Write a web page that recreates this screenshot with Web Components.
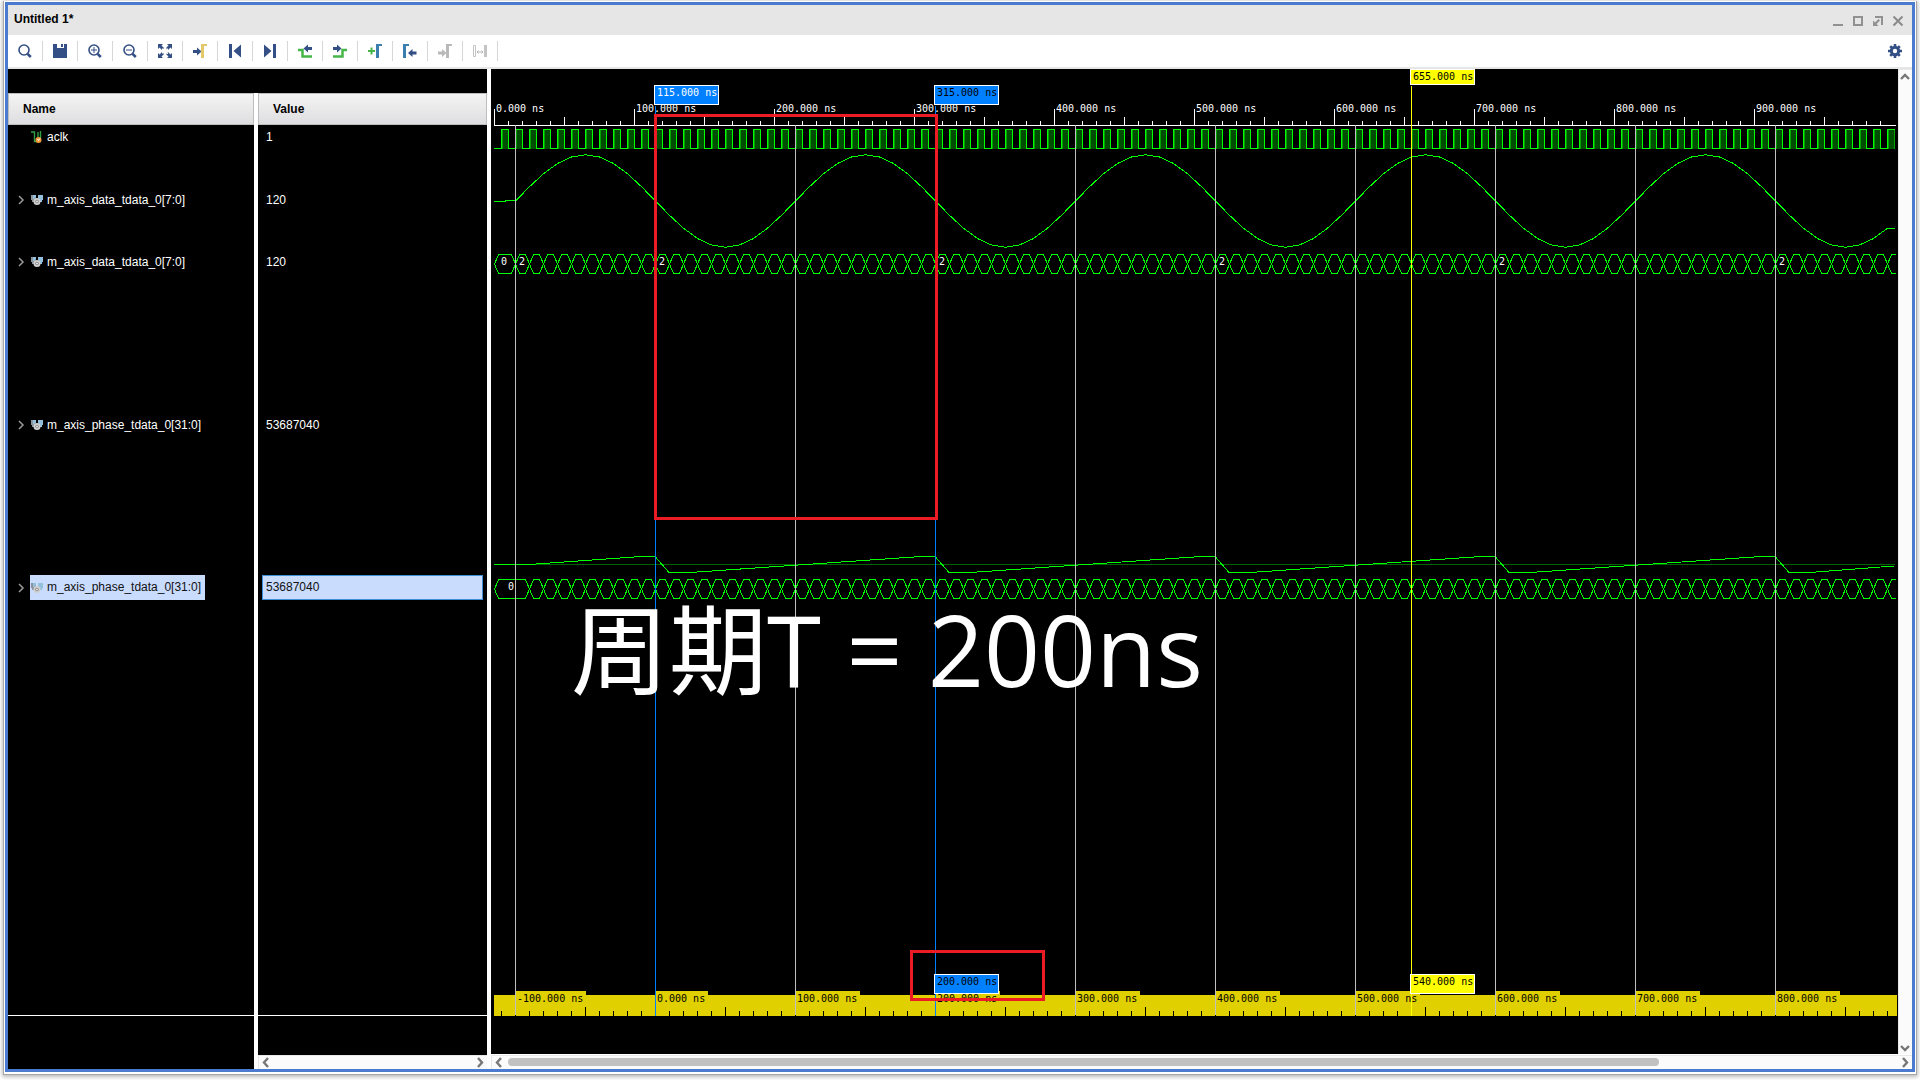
<!DOCTYPE html>
<html lang="en">
<head>
<meta charset="utf-8">
<meta name="viewport" content="width=device-width, initial-scale=1">
<title>Untitled 1*</title>
<style>
  html, body { height: 100%; }
  body {
    margin: 0;
    padding: 2px 5px 8px;
    box-sizing: border-box;
    background: #fff;
    font: 12px/16px "Liberation Sans", Arial, sans-serif;
  }
</style>
</head>
<body>
<wave-window title-text="Untitled 1*">
  <wave-toolbar slot="toolbar"></wave-toolbar>
  <signal-table slot="signals"></signal-table>
  <wave-view slot="waves"></wave-view>
</wave-window>

<script>
const NAVY = "#334f85";
const GREEN = "#46b648";
const TEAL = "#3a7fb0";

const LENS = `<circle cx="6" cy="6" r="5" fill="none" stroke="${NAVY}" stroke-width="1.6"/><path d="M9.6 9.8 12.8 13" stroke="${NAVY}" stroke-width="2.6"/>`;
const rightArrow = (x, y, c) => `<path fill="${c}" d="M${x} ${y + 2.5}h4V${y}l4.5 4-4.5 4v-2.5h-4z"/>`;
const leftArrow = (x, y, c) => `<path fill="${c}" d="M${x + 8.5} ${y + 2.5}h-4V${y}l-4.5 4 4.5 4v-2.5h4z"/>`;
const edge = (x, c) => `<path fill="${c}" d="M${x} 0h6v2h-3v12h-3z"/>`;

const ICONS = {
  search: LENS,
  save: `<path fill="${NAVY}" d="M0 0h4v4h7V0h3v14H0z"/><path fill="${NAVY}" d="M8 0h2v3H8z"/>`,
  zoomIn: LENS + `<path d="M3 6h6M6 3v6" stroke="${NAVY}"/>`,
  zoomOut: LENS + `<path d="M3 6h6" stroke="${NAVY}"/>`,
  fit: `<g fill="${NAVY}"><path d="M0 0h5L3.5 1.5 6 4 4 6 1.5 3.5 0 5z"/><path d="M14 0v5l-1.5-1.5L10 6 8 4l2.5-2.5L9 0z"/><path d="M0 14V9l1.5 1.5L4 8l2 2-2.5 2.5L5 14z"/><path d="M14 14H9l1.5-1.5L8 10l2-2 2.5 2.5L14 9z"/></g><path fill="#fff" d="M4 4l2 2H4zM10 4v2H8zM4 10V8h2zM10 10H8l2-2z"/>`,
  toCursor: rightArrow(0, 3.5, NAVY) + edge(8, "#e2c868"),
  first: `<path fill="${NAVY}" d="M1 0h3v14H1zM13 .5v13L5.500 7z"/>`,
  last: `<path fill="${NAVY}" d="M10 0h3v14h-3zM1 .5v13L8.500 7z"/>`,
  prevEdge: `<path d="M0 6h4.500v6.500H14" fill="none" stroke="${GREEN}" stroke-width="2.5"/>` + leftArrow(5.5, 0.5, NAVY),
  nextEdge: `<path d="M0 12.500h9.500V6H14" fill="none" stroke="${GREEN}" stroke-width="2.5"/>` + rightArrow(0, 0.5, NAVY),
  addMarker: `<path d="M0 7h7M3.500 3.500v7" stroke="${GREEN}" stroke-width="2"/>` + edge(8, TEAL),
  prevMarker: edge(0, TEAL) + leftArrow(5, 5, NAVY),
  nextMarker: rightArrow(0, 5, "#b9b9b9") + edge(8, "#b9b9b9"),
  swap: `<path fill="none" stroke="#c4c4c4" d="M.5 1.500h2v11h-2z"/><path fill="#c4c4c4" d="M11 1h3v12h-3z"/><path fill="none" stroke="#b4b4b4" d="M4 8h6M5.500 6.500 4 8l1.500 1.500M8.500 6.500 10 8l-1.500 1.500"/>`,
  gear: `<circle cx="7" cy="7" r="3.700" fill="none" stroke="${NAVY}" stroke-width="3"/><path d="M7 0v3M7 11v3M0 7h3M11 7h3M2.200 2.200l2 2M9.800 9.800l2 2M2.200 11.800l2-2M9.800 4.200l2-2" stroke="${NAVY}" stroke-width="2.6"/>`,
  minimize: `<path d="M2 11h10" stroke="#919191" stroke-width="2"/>`,
  maximize: `<path d="M3 3h8v8H3z" fill="none" stroke="#919191" stroke-width="2"/>`,
  float: `<path d="M4 3h7v8" fill="none" stroke="#919191" stroke-width="2"/><path fill="#919191" d="M2 12V6.500l2 2L7.500 5 9 6.500 5.500 10l2 2z"/>`,
  close: `<path d="M2.500 2.500l9 9M11.500 2.500l-9 9" stroke="#8a8a8a" stroke-width="2"/>`,
};

class ToolButton extends HTMLElement {
  constructor() {
    super();
    this.attachShadow({ mode: "open" });
  }

  connectedCallback() {
    this.shadowRoot.innerHTML = `
      <style>
        :host { display: block; }
        button {
          display: grid;
          place-items: center;
          width: 100%;
          height: 100%;
          padding: 0;
          border: 0;
          background: none;
        }
        svg { display: block; width: 14px; height: 14px; }
      </style>
      <button type="button" aria-label="${this.getAttribute("label")}">
        <svg viewBox="0 0 14 14" aria-hidden="true">${ICONS[this.getAttribute("icon")]}</svg>
      </button>
    `;
  }
}

class WaveToolbar extends HTMLElement {
  constructor() {
    super();
    this.attachShadow({ mode: "open" });
  }

  connectedCallback() {
    const tools = [
      ["search", "Find"], ["save", "Save"], ["zoomIn", "Zoom in"], ["zoomOut", "Zoom out"],
      ["fit", "Zoom fit"], ["toCursor", "Go to cursor"], ["first", "Go to time 0"],
      ["last", "Go to last time"], ["prevEdge", "Previous transition"],
      ["nextEdge", "Next transition"], ["addMarker", "Add marker"],
      ["prevMarker", "Previous marker"], ["nextMarker", "Next marker"], ["swap", "Swap cursors"],
    ];
    this.shadowRoot.innerHTML = `
      <style>
        :host {
          display: flex;
          align-items: center;
          height: 32px;
          background: #fff;
          border-bottom: 2px solid #e6e6e6;
        }
        tool-button { width: 34px; height: 20px; border-right: 1px solid #d6d6d6; }
        .settings { margin-left: auto; border: 0; }
      </style>
      ${tools.map(([icon, label]) => `<tool-button icon="${icon}" label="${label}"></tool-button>`).join("")}
      <tool-button class="settings" icon="gear" label="Settings"></tool-button>
    `;
  }
}

class WaveWindow extends HTMLElement {
  constructor() {
    super();
    this.attachShadow({ mode: "open" });
  }

  connectedCallback() {
    this.shadowRoot.innerHTML = `
      <style>
        :host {
          display: flex;
          flex-direction: column;
          box-sizing: border-box;
          height: 100%;
          border: 3px solid #4a7bcf;
          background: #fff;
          box-shadow: 0 0 0 1px #fff, 0 1px 0 1px #fff, 0 1px 0 2px #a6a6a6, 0 2px 4px 3px #bbb;
        }
        header {
          display: flex;
          justify-content: space-between;
          height: 30px;
          padding: 0 4px 0 6px;
          background: #e6e6e6;
        }
        h1 { margin: 0; font-size: 12px; line-height: 29px; }
        nav { display: flex; }
        nav tool-button { width: 20px; height: 32px; }
        main { flex: 1; display: flex; gap: 4px; min-height: 0; }
        slot[name="waves"]::slotted(*) { flex: 1; min-width: 0; }
      </style>
      <header>
        <h1>${this.getAttribute("title-text")}</h1>
        <nav>
          <tool-button icon="minimize" label="Minimize"></tool-button>
          <tool-button icon="maximize" label="Maximize"></tool-button>
          <tool-button icon="float" label="Float"></tool-button>
          <tool-button icon="close" label="Close"></tool-button>
        </nav>
      </header>
      <slot name="toolbar"></slot>
      <main>
        <slot name="signals"></slot>
        <slot name="waves"></slot>
      </main>
    `;
  }
}

class ScrollTrack extends HTMLElement {
  constructor() {
    super();
    this.attachShadow({ mode: "open" });
  }

  connectedCallback() {
    const vertical = this.hasAttribute("vertical");
    const back = vertical ? "M3 9 7 5l4 4" : "M10 3 6 7.500l4 4.500";
    const next = vertical ? "M3 6l4 4 4-4" : "M5 3l4 4.500L5 12";
    this.shadowRoot.innerHTML = `
      <style>
        :host {
          display: flex;
          flex-direction: ${vertical ? "column" : "row"};
          justify-content: space-between;
          box-sizing: border-box;
          min-width: 14px;
          min-height: 14px;
          padding: ${vertical ? "1px 0 0" : "0"};
          background: #fbfbfb;
          box-shadow: inset 1px 1px #e8e8e8;
        }
        button { width: 14px; height: 14px; padding: 0; border: 0; background: none; }
        svg { display: block; }
        .rail { flex: 1; display: flex; padding: 3px; }
        .thumb { width: var(--thumb, 0); border-radius: 4px; background: #c1c1c1; }
      </style>
      <button type="button" aria-label="Scroll back"><svg width="14" height="14"><path d="${back}" fill="none" stroke="#777" stroke-width="2.4"/></svg></button>
      <div class="rail"><div class="thumb"></div></div>
      <button type="button" aria-label="Scroll forward"><svg width="14" height="14"><path d="${next}" fill="none" stroke="#777" stroke-width="2.4"/></svg></button>
    `;
  }
}

class SignalTable extends HTMLElement {
  constructor() {
    super();
    this.attachShadow({ mode: "open" });
  }

  connectedCallback() {
    const signals = [
      { name: "aclk", value: "1", size: "short", clock: true },
      { name: "m_axis_data_tdata_0[7:0]", value: "120", size: "analog" },
      { name: "m_axis_data_tdata_0[7:0]", value: "120", size: "short" },
      { name: "m_axis_phase_tdata_0[31:0]", value: "53687040", size: "tall" },
      { name: "m_axis_phase_tdata_0[31:0]", value: "53687040", size: "short selected" },
    ];
    const clockIcon = `<svg class="icon" viewBox="0 0 12 12"><path d="M0 1h3.500v9.500H7V1M9.500 0v7" fill="none" stroke="#2f9e44" stroke-width="1.400"/><circle cx="7.500" cy="9" r="3" fill="#f0983a"/><path d="M6.500 8l1 1.500L9 7.500" fill="none" stroke="#fff"/></svg>`;
    const busIcon = `<svg class="icon" viewBox="0 0 12 12"><path d="M0 1h5v3L3 8H1V6H0z" fill="#8b959b"/><path d="M2 1h3v2L3 5H2zM7 1h5v5h-1v2H9L7 4z" fill="#93c0dc"/><circle cx="6" cy="7.500" r="2.600" fill="#777" stroke="#d0d0d0" stroke-width="1.800"/><circle cx="6" cy="7.500" r="1" fill="#eee"/></svg>`;
    this.shadowRoot.innerHTML = `
      <style>
        :host { display: flex; color: #fff; }
        table { display: flex; flex-direction: column; background: #fff; }
        thead, tfoot { display: block; }
        tbody { flex: 1; display: flex; flex-direction: column; }
        tr { display: grid; grid-template-columns: 246px 229px; gap: 4px; }
        th, td { display: flex; align-items: center; box-sizing: border-box; padding: 0; background: #000; }
        thead tr { border-top: 24px solid #000; }
        th {
          height: 32px;
          padding: 0 14px;
          border: 1px solid #bdbdbd;
          background: linear-gradient(#f4f4f4, #dedee0);
          color: #000;
          text-align: left;
        }
        .short { height: 24px; }
        .analog { height: 101px; }
        .tall { height: 301px; }
        .rest { flex: 1; }
        .selected { height: 25px; }
        .name { padding-left: 8px; }
        .toggle { width: 14px; height: 16px; padding: 0; border: 0; background: none; }
        .toggle svg { display: block; }
        .tag { display: flex; align-items: center; gap: 4px; height: 100%; padding: 0 4px 0 1px; }
        .icon { width: 12px; height: 12px; }
        .value { padding: 0 4px; }
        .value span { flex: 1; padding: 0 4px; }
        .selected .tag { background: #cadcfe; color: #111; line-height: 15px; }
        .selected .value span {
          box-sizing: border-box;
          height: 100%;
          padding: 0 3px;
          border: 1px solid #3f8fd6;
          background: #cadcfe;
          color: #111;
          line-height: 23px;
        }
        tfoot td { height: 54px; border-top: 1px solid #fff; align-items: flex-end; }
        scroll-track { flex: 1; }
      </style>
      <table>
        <thead><tr><th scope="col">Name</th><th scope="col">Value</th></tr></thead>
        <tbody>
          ${signals.map((s) => `
            <tr class="${s.size}">
              <td class="name">
                ${s.clock ? `<span class="toggle"></span>` : `<button class="toggle" type="button" aria-label="Expand"><svg width="14" height="16"><path d="M3 4l4 4-4 4" fill="none" stroke="#999" stroke-width="1.500"/></svg></button>`}
                <span class="tag">${s.clock ? clockIcon : busIcon}${s.name}</span>
              </td>
              <td class="value"><span>${s.value}</span></td>
            </tr>`).join("")}
          <tr class="rest"><td></td><td></td></tr>
        </tbody>
        <tfoot><tr><td></td><td><scroll-track></scroll-track></td></tr></tfoot>
      </table>
    `;
  }
}

// All drawing is in canvas pixels; time 0 sits at LEFT, 1.4 px per ns.
const LEFT = 3;
const SCALE = 1.4;
const END = 1000;
const px = (t) => LEFT + Math.round(t * SCALE);

class WaveCanvas extends HTMLElement {
  constructor() {
    super();
    this.attachShadow({ mode: "open" });
  }

  connectedCallback() {
    this.render();
    window.addEventListener("resize", () => this.render());
  }

  vline(x, y1, y2, color) {
    return `<rect x="${x}" y="${y1}" width="1" height="${y2 - y1}" fill="${color}"/>`;
  }

  text(x, y, label, color) {
    return `<text x="${x}" y="${y}" fill="${color}">${label}</text>`;
  }

  topRuler() {
    let out = `<rect x="${LEFT}" y="56" width="${px(END) - LEFT + 2}" height="1" fill="#fff"/>`;
    for (let t = 0; t < END; t += 10) {
      const y = t % 100 === 0 ? 40 : t % 50 === 0 ? 48 : 52;
      out += this.vline(px(t), y, 57, "#fff");
      if (t % 100 === 0) out += this.text(px(t) + 2, 43, `${t}.000 ns`, "#fff");
    }
    return out;
  }

  bottomRuler(base) {
    let out = `<rect x="${LEFT}" y="${base - 21}" width="${px(END)}" height="21" fill="#e0d000"/>`;
    for (let t = -110; t < 885; t += 10) {
      const x = px(t + 115);
      out += this.vline(x, t % 50 === 0 ? base - 9 : base - 5, base, "#000");
      if (t % 100 === 0) {
        const label = `${t}.000 ns`;
        out += `<rect x="${x}" y="${base - 25}" width="${label.length * 6 + 5}" height="5" fill="#e0d000"/>`;
        out += this.text(x + 2, base - 14, label, "#000");
      }
    }
    return out;
  }

  clock() {
    let line = `M${LEFT} 79.5`;
    let fills = "";
    for (let t = 5; t < END; t += 10) {
      const x = px(t);
      const last = t + 10 > END;
      fills += `<rect x="${x}" y="60" width="8" height="20" fill="#00a000"/><rect x="${x + 2}" y="61" width="5" height="19" fill="#004c00"/>`;
      line += `H${x + 0.5}V60.5H${x + 7.5}` + (last ? "" : "V79.5");
    }
    return `${fills}<path d="${line}" class="trace"/>`;
  }

  sine() {
    let d = `M${LEFT} 132.5H${LEFT + 11}V131.5H${px(15)}`;
    for (let t = 15; t < END; t += 10) {
      d += `L${px(t) + 0.5} ${(132 - 46.3 * Math.sin((t - 15) * Math.PI / 100)).toFixed(1)}`;
    }
    return `<path d="${d}h7" class="trace"/>`;
  }

  ramp() {
    let d = `M${LEFT} 495.5H${px(25)}L${px(105)} 487.5H${px(115)}`;
    for (let t = 115; t < 900; t += 200) {
      d += `L${px(t + 10)} 503.5H${px(t + 25)}L${px(t + 190)} 487.5H${px(t + 200)}`;
    }
    d += `L${px(925)} 503.5H${px(940)}L${px(995)} 497.5h7`;
    return `<rect x="${LEFT}" y="495" width="${px(END) - LEFT + 1}" height="1" fill="#006400"/><path d="${d}" class="trace"/>`;
  }

  bus(top, firstEdge) {
    const bottom = top + 19;
    const mid = top + 9.5;
    let d = "";
    let from = 0;
    for (let to = firstEdge; from < END; to += 10) {
      const a = px(from) + 0.5;
      const b = px(to) + 0.5;
      if (to > END) {
        d += `M${a + 8} ${top}H${a + 4}L${a} ${mid}L${a + 4} ${bottom}H${a + 8}`;
      } else {
        d += `M${a} ${mid}L${a + 4} ${top}H${b - 4}L${b} ${mid}L${b - 4} ${bottom}H${a + 4}Z`;
      }
      from = to;
    }
    return `<path d="${d}" class="trace"/>`;
  }

  flag(x, y, height, label, fill, color) {
    return `<rect x="${x - 0.5}" y="${y + 0.5}" width="64" height="${height - 1}" fill="${fill}" stroke="#fff"/>` +
      this.text(x + 2, y + 11, label, color);
  }

  render() {
    const height = this.clientHeight;
    const base = height - 38;
    const blue = "#0080ff";
    let markers = "";
    for (let t = 15; t < END; t += 100) {
      const isBlue = t === 115 || t === 315;
      markers += this.vline(px(t), isBlue ? 37 : 56, isBlue ? base : base - 1, isBlue ? blue : "#c0c0c0");
    }
    const twos = [15, 115, 315, 515, 715, 915].map((t) => this.text(px(t) + 4, 196, "2", "#fff")).join("");
    this.shadowRoot.innerHTML = `
      <style>
        :host { display: block; overflow: hidden; background: #000; }
        svg { display: block; width: 100%; height: ${height}px; }
        rect, .trace { shape-rendering: crispEdges; }
        text { font: 10px "DejaVu Sans Mono", monospace; white-space: pre; }
        .trace { fill: none; stroke: #0f0; }
        .box { fill: none; stroke: #ed1c24; stroke-width: 3; }
        .note { font: 98px "Open Sans", "Noto Sans CJK SC", sans-serif; fill: #fff; }
      </style>
      <svg role="img" aria-label="Waveform">
        ${this.topRuler()}
        ${this.clock()}
        ${this.sine()}
        ${this.bus(185.5, 15)}
        ${this.ramp()}
        ${this.bus(510.5, 25)}
        ${this.bottomRuler(base)}
        ${markers}
        ${this.text(10, 196, "0", "#fff")}${twos}
        ${this.text(17, 521, "0", "#fff")}
        ${this.vline(px(655), 17, base, "#ff0")}
        ${this.flag(px(115), 16, 20, "115.000 ns", blue, "#fff")}
        ${this.flag(px(315), 16, 20, "315.000 ns", blue, "#000")}
        ${this.flag(px(655), 0, 16, "655.000 ns", "#ff0", "#000")}
        ${this.flag(px(315), base - 42, 20, "200.000 ns", blue, "#000")}
        ${this.flag(px(655), base - 42, 20, "540.000 ns", "#ff0", "#000")}
        <rect class="box" x="164.5" y="46.5" width="281" height="403"/>
        <rect class="box" x="420.500" y="${base - 64.5}" width="132" height="48"/>
        <text class="note" x="80" y="618">周期T = 200ns</text>
      </svg>
    `;
  }
}

class WaveView extends HTMLElement {
  constructor() {
    super();
    this.attachShadow({ mode: "open" });
  }

  connectedCallback() {
    this.shadowRoot.innerHTML = `
      <style>
        :host { display: flex; flex-direction: column; min-width: 0; }
        .row { flex: 1; display: flex; min-height: 0; }
        wave-canvas { flex: 1; min-width: 0; }
        .bottom { --thumb: 83%; border-top: 1px solid #fff; }
      </style>
      <div class="row">
        <wave-canvas></wave-canvas>
        <scroll-track vertical></scroll-track>
      </div>
      <scroll-track class="bottom"></scroll-track>
    `;
  }
}

customElements.define("tool-button", ToolButton);
customElements.define("scroll-track", ScrollTrack);
customElements.define("wave-toolbar", WaveToolbar);
customElements.define("wave-window", WaveWindow);
customElements.define("signal-table", SignalTable);
customElements.define("wave-view", WaveView);
customElements.define("wave-canvas", WaveCanvas);
</script>
</body>
</html>
